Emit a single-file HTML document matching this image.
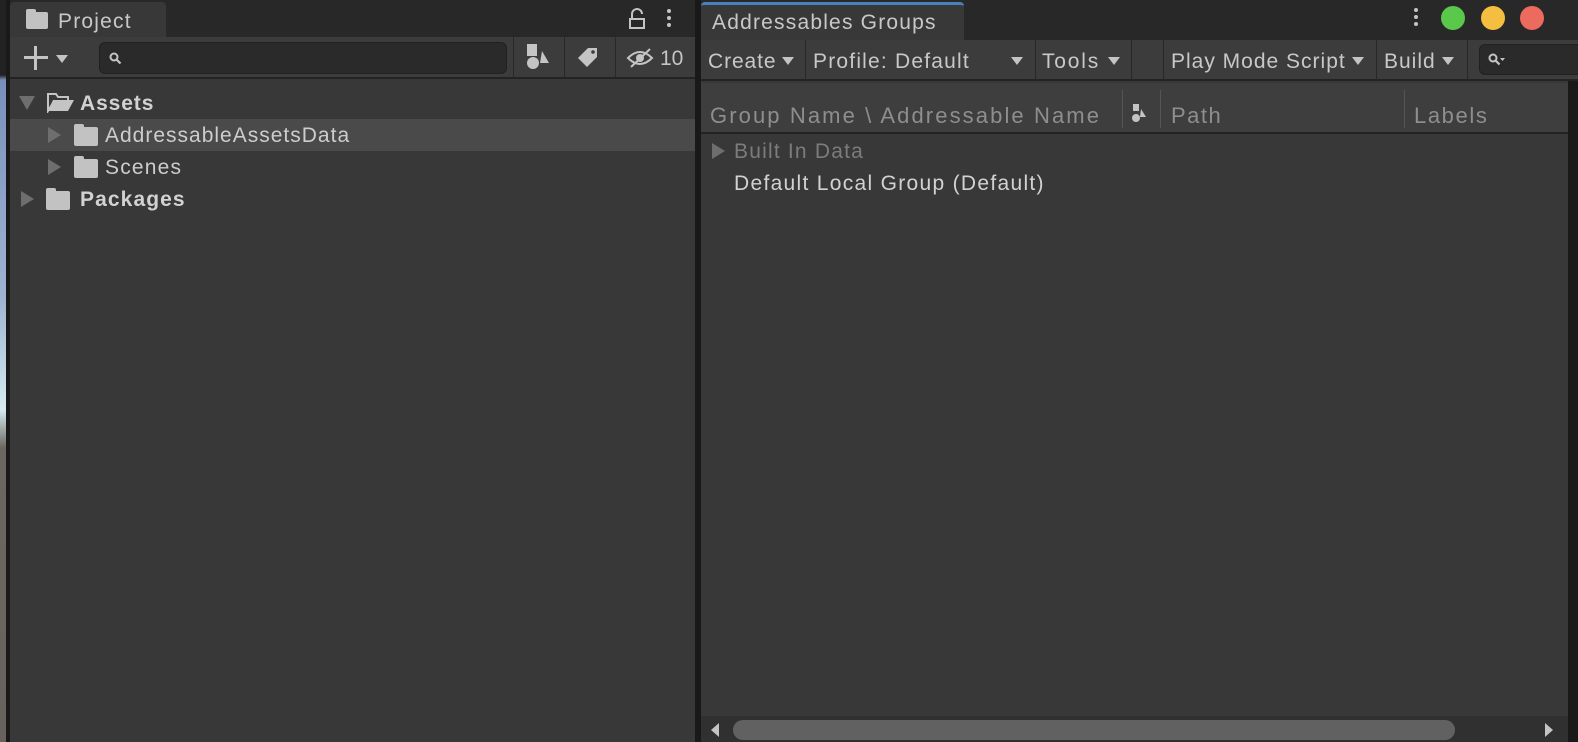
<!DOCTYPE html>
<html><head><style>
*{margin:0;padding:0;box-sizing:border-box}
body{width:1578px;height:742px;background:#191919;position:relative;overflow:hidden;font-family:"Liberation Sans",sans-serif;color:#c4c4c4;letter-spacing:1.2px}
.a{position:absolute}
.tri{width:0;height:0;border-left:6px solid transparent;border-right:6px solid transparent;border-top:8px solid #c4c4c4;display:inline-block}
.tr{width:0;height:0;border-top:8px solid transparent;border-bottom:8px solid transparent;border-left:13px solid #6e6e6e}
.td{width:0;height:0;border-left:8px solid transparent;border-right:8px solid transparent;border-top:14px solid #6e6e6e}
.fold{width:24px;height:19px;background:#c2c2c2;border-radius:2px}
.fold:before{content:"";position:absolute;left:0;top:-3px;width:10px;height:4px;background:#c2c2c2;border-radius:2px 2px 0 0}
</style></head><body>
<div class="a" style="left:0;top:0;width:6px;height:742px;background:linear-gradient(#222 0,#222 75px,#7a8fbb 80px,#9fb4d2 300px,#d6eaf0 410px,#6c6660 448px,#67625d 742px)"></div>
<!-- left panel -->
<div class="a" style="left:10px;top:0;width:685px;height:742px;background:#383838"></div>
<div class="a" style="left:10px;top:0;width:685px;height:37px;background:#282828"></div>
<div class="a" style="left:10px;top:2px;width:156px;height:35px;background:#383838;border-radius:4px 4px 0 0"></div>
<div class="a fold" style="left:26px;top:12px;width:22px;height:17px"></div>
<div class="a" style="left:58px;top:10px;font-size:21px;color:#c8c8c8">Project</div>
<svg class="a" style="left:628px;top:8px" width="20" height="22"><path d="M4 10V6a5 5 0 0 1 10 0" fill="none" stroke="#c4c4c4" stroke-width="2"/><rect x="2" y="11" width="14" height="9" fill="none" stroke="#c4c4c4" stroke-width="2"/></svg>
<div class="a" style="left:667px;top:9px;width:4px;height:4px;background:#c4c4c4;border-radius:2px;box-shadow:0 7px #c4c4c4,0 14px #c4c4c4"></div>
<div class="a" style="left:10px;top:37px;width:685px;height:42px;background:#3c3c3c;border-bottom:2px solid #232323"></div>
<div class="a" style="left:24px;top:56px;width:24px;height:3px;background:#c4c4c4"></div>
<div class="a" style="left:34px;top:46px;width:3px;height:24px;background:#c4c4c4"></div>
<div class="a tri" style="left:56px;top:55px"></div>
<div class="a" style="left:99px;top:42px;width:408px;height:32px;background:#2a2a2a;border:1px solid #212121;border-radius:6px"></div>
<svg class="a" style="left:108px;top:51px" width="16" height="16"><circle cx="6" cy="6" r="3.5" fill="none" stroke="#c4c4c4" stroke-width="2"/><path d="M8.5 8.5l4 4" stroke="#c4c4c4" stroke-width="2.2"/></svg>
<div class="a" style="left:513px;top:37px;width:1px;height:41px;background:#282828"></div>
<div class="a" style="left:564px;top:37px;width:1px;height:41px;background:#282828"></div>
<div class="a" style="left:615px;top:37px;width:1px;height:41px;background:#282828"></div>
<svg class="a" style="left:524px;top:43px" width="30" height="30"><rect x="3" y="1" width="10" height="12" fill="#c4c4c4"/><circle cx="9" cy="20" r="6" fill="#c4c4c4"/><path d="M18 8l7 12h-9z" fill="#c4c4c4"/></svg>
<svg class="a" style="left:576px;top:46px" width="24" height="24"><path d="M12 2h9v9l-10 10-9-9z" fill="#c4c4c4"/><circle cx="17" cy="6" r="1.8" fill="#3c3c3c"/></svg>
<svg class="a" style="left:626px;top:47px" width="30" height="22"><path d="M2 11q12-12 24 0q-12 12-24 0z" fill="none" stroke="#c4c4c4" stroke-width="2"/><circle cx="14" cy="11" r="4" fill="#c4c4c4"/><path d="M5 20L24 2" stroke="#c4c4c4" stroke-width="2"/></svg>
<div class="a" style="left:660px;top:47px;font-size:21px;letter-spacing:0">10</div>
<div class="a td" style="left:19px;top:96px"></div>
<svg class="a" style="left:46px;top:91px" width="30" height="22"><path d="M2 3h8l2 3h10v4H8L2 20z" fill="none" stroke="#c4c4c4" stroke-width="2"/><path d="M2 20L7 9h21l-6 11z" fill="#c4c4c4"/></svg>
<div class="a" style="left:80px;top:92px;font-size:21px;font-weight:bold;color:#d2d2d2;letter-spacing:0.9px">Assets</div>
<div class="a" style="left:10px;top:119px;width:685px;height:32px;background:#4a4a4a"></div>
<div class="a tr" style="left:48px;top:127px"></div>
<div class="a fold" style="left:74px;top:127px"></div>
<div class="a" style="left:105px;top:124px;font-size:21px;color:#cdcdcd;letter-spacing:1px">AddressableAssetsData</div>
<div class="a tr" style="left:48px;top:159px"></div>
<div class="a fold" style="left:74px;top:159px"></div>
<div class="a" style="left:105px;top:156px;font-size:21px;color:#cdcdcd">Scenes</div>
<div class="a tr" style="left:21px;top:191px"></div>
<div class="a fold" style="left:46px;top:191px"></div>
<div class="a" style="left:80px;top:188px;font-size:21px;font-weight:bold;color:#d2d2d2;letter-spacing:1.1px">Packages</div>
<!-- right panel -->
<div class="a" style="left:701px;top:0;width:867px;height:742px;background:#383838"></div>
<div class="a" style="left:701px;top:0;width:877px;height:40px;background:#282828"></div>
<div class="a" style="left:701px;top:2px;width:263px;height:38px;background:#383838;border-radius:4px 4px 0 0;border-top:3px solid #4a7ebf"></div>
<div class="a" style="left:712px;top:11px;font-size:21px;color:#c8c8c8">Addressables Groups</div>
<div class="a" style="left:1414px;top:8px;width:4px;height:4px;background:#c4c4c4;border-radius:2px;box-shadow:0 7px #c4c4c4,0 14px #c4c4c4"></div>
<div class="a" style="left:1441px;top:6px;width:24px;height:24px;border-radius:50%;background:#5ac84b"></div>
<div class="a" style="left:1481px;top:6px;width:24px;height:24px;border-radius:50%;background:#f4be41"></div>
<div class="a" style="left:1520px;top:6px;width:24px;height:24px;border-radius:50%;background:#ec6a5e"></div>
<div class="a" style="left:701px;top:40px;width:877px;height:41px;background:#3c3c3c;border-bottom:2px solid #232323;font-size:21px;color:#c8c8c8">
<span class="a" style="left:7px;top:10px;letter-spacing:0.9px">Create</span><span class="a tri" style="left:81px;top:17px"></span>
<span class="a" style="left:104px;top:0;width:1px;height:40px;background:#282828"></span>
<span class="a" style="left:112px;top:10px">Profile: Default</span><span class="a tri" style="left:310px;top:17px"></span>
<span class="a" style="left:334px;top:0;width:1px;height:40px;background:#282828"></span>
<span class="a" style="left:341px;top:10px;letter-spacing:1.8px">Tools</span><span class="a tri" style="left:407px;top:17px"></span>
<span class="a" style="left:430px;top:0;width:1px;height:40px;background:#282828"></span>
<span class="a" style="left:462px;top:0;width:1px;height:40px;background:#282828"></span>
<span class="a" style="left:470px;top:10px;letter-spacing:1px">Play Mode Script</span><span class="a tri" style="left:651px;top:17px"></span>
<span class="a" style="left:675px;top:0;width:1px;height:40px;background:#282828"></span>
<span class="a" style="left:683px;top:10px;letter-spacing:1px">Build</span><span class="a tri" style="left:741px;top:17px"></span>
<span class="a" style="left:766px;top:0;width:1px;height:40px;background:#282828"></span>
</div>
<div class="a" style="left:1479px;top:44px;width:110px;height:31px;background:#2a2a2a;border:1px solid #212121;border-radius:6px"></div>
<svg class="a" style="left:1487px;top:52px" width="20" height="16"><circle cx="6" cy="6" r="3.5" fill="none" stroke="#c4c4c4" stroke-width="2"/><path d="M8.5 8.5l4 4" stroke="#c4c4c4" stroke-width="2.2"/><path d="M13 6h5l-2.5 3z" fill="#c4c4c4"/></svg>
<div class="a" style="left:701px;top:83px;width:867px;height:51px;background:#3e3e3e;border-bottom:2px solid #232323"></div>
<div class="a" style="left:710px;top:103px;font-size:22px;color:#8e8e8e;letter-spacing:2.1px">Group Name \ Addressable Name</div>
<div class="a" style="left:1122px;top:90px;width:1px;height:38px;background:#555"></div>
<div class="a" style="left:1160px;top:90px;width:1px;height:38px;background:#555"></div>
<div class="a" style="left:1404px;top:90px;width:1px;height:38px;background:#555"></div>
<svg class="a" style="left:1131px;top:104px" width="22" height="22"><rect x="2" y="0" width="6" height="7" fill="#c4c4c4"/><circle cx="5" cy="14" r="4" fill="#c4c4c4"/><path d="M10 5l5 8h-6z" fill="#c4c4c4"/></svg>
<div class="a" style="left:1171px;top:103px;font-size:22px;color:#8e8e8e;letter-spacing:1.5px">Path</div>
<div class="a" style="left:1414px;top:103px;font-size:22px;color:#8e8e8e;letter-spacing:1.6px">Labels</div>
<div class="a" style="left:712px;top:143px;width:0;height:0;border-top:8px solid transparent;border-bottom:8px solid transparent;border-left:13px solid #6e6e6e"></div>
<div class="a" style="left:734px;top:140px;font-size:21px;color:#7c7c7c">Built In Data</div>
<div class="a" style="left:734px;top:172px;font-size:21px;color:#d2d2d2;letter-spacing:1.3px">Default Local Group (Default)</div>
<div class="a" style="left:701px;top:716px;width:867px;height:26px;background:#303030"></div>
<div class="a" style="left:733px;top:720px;width:722px;height:20px;background:#616161;border-radius:10px"></div>
<div class="a" style="left:711px;top:723px;width:0;height:0;border-top:7px solid transparent;border-bottom:7px solid transparent;border-right:8px solid #c4c4c4"></div>
<div class="a" style="left:1545px;top:723px;width:0;height:0;border-top:7px solid transparent;border-bottom:7px solid transparent;border-left:8px solid #c4c4c4"></div>
</body></html>
